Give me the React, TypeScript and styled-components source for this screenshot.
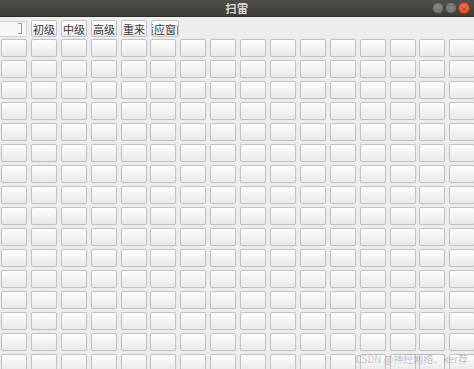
import styled, { createGlobalStyle } from "styled-components";

const GlobalStyle = createGlobalStyle`
  html, body {
    margin: 0;
    padding: 0;
    overflow: hidden;
    background: #ededed;
  }
`;

const Window = styled.div`
  width: 474px;
  height: 369px;
  display: flex;
  flex-direction: column;
  background: #ededed;
  font-family: "Noto Sans CJK SC", "Noto Sans", sans-serif;
  overflow: hidden;
  position: relative;
`;

const TitleBar = styled.div`
  height: 16px;
  flex-shrink: 0;
  display: flex;
  align-items: center;
  justify-content: center;
  position: relative;
  background: linear-gradient(#504f4a, #3c3b37);
  border-bottom: 1px solid #2e2d2a;
`;

const Title = styled.span`
  color: #dfdbd2;
  font-size: 11px;
  font-weight: 700;
  letter-spacing: 0.5px;
`;

const Controls = styled.div`
  position: absolute;
  right: 4px;
  top: 2px;
  display: flex;
  gap: 0;
`;

const Dot = styled.div<{ $close?: boolean }>`
  width: 10px;
  height: 10px;
  margin-left: 1px;
  border-radius: 50%;
  background: ${(p) =>
    p.$close
      ? "radial-gradient(circle at 50% 40%, #f3744a, #df4b1b)"
      : "radial-gradient(circle at 50% 40%, #8c8b86, #6b6a66)"};
  border: 1px solid ${(p) => (p.$close ? "#b23c14" : "#4a4945")};
  display: flex;
  align-items: center;
  justify-content: center;
  font-size: 6px;
  color: ${(p) => (p.$close ? "#5a1a05" : "#3c3b37")};
`;

const Toolbar = styled.div`
  height: 21px;
  flex-shrink: 0;
  display: flex;
  align-items: center;
  gap: 4px;
  padding: 1px 0 0 0;
`;

const CountBox = styled.div`
  width: 27px;
  height: 16px;
  box-sizing: border-box;
  background: #f6f6f6;
  border: 1px solid #d4d4d4;
  border-left: none;
  border-radius: 0 2px 2px 0;
  display: flex;
  align-items: center;
  justify-content: flex-end;
  padding-right: 4px;
`;

const Caret = styled.span`
  width: 3px;
  height: 9px;
  border: 1px solid #9a9a9a;
  border-left: none;
`;

const ToolButton = styled.div<{ $wide?: boolean }>`
  width: ${(p) => (p.$wide ? 28 : 26)}px;
  height: 17px;
  box-sizing: border-box;
  border: 1px solid #c4c4c4;
  border-radius: 2px;
  background: linear-gradient(#fbfbfb, #eaeaea);
  display: flex;
  align-items: center;
  justify-content: center;
  overflow: hidden;
  white-space: nowrap;
  font-size: 11px;
  color: #3a3a3a;
`;

const Board = styled.div`
  display: grid;
  grid-template-columns: repeat(16, 26px);
  grid-auto-rows: 18px;
  column-gap: 3.9px;
  row-gap: 3px;
  padding: 0 0 0 1px;
`;

const Cell = styled.div`
  box-sizing: border-box;
  border: 1px solid #c2c2c2;
  border-radius: 2px;
  background: linear-gradient(#fdfdfd, #e9e9e9);
  box-shadow: 0 0 1px rgba(0, 0, 0, 0.12);
`;

const Watermark = styled.div`
  position: absolute;
  right: 6px;
  bottom: 3px;
  font-size: 10px;
  color: rgba(150, 150, 150, 0.55);
  white-space: nowrap;
`;

const levels = ["初级", "中级", "高级", "重来"];

export default function App() {
  const cells = Array.from({ length: 16 * 16 });
  return (
    <>
      <GlobalStyle />
      <Window>
        <TitleBar>
          <Title>扫雷</Title>
          <Controls>
            <Dot>–</Dot>
            <Dot>▢</Dot>
            <Dot $close>×</Dot>
          </Controls>
        </TitleBar>
        <Toolbar>
          <CountBox>
            <Caret />
          </CountBox>
          {levels.map((l) => (
            <ToolButton key={l}>{l}</ToolButton>
          ))}
          <ToolButton $wide>适应窗口</ToolButton>
        </Toolbar>
        <Board>
          {cells.map((_, i) => (
            <Cell key={i} />
          ))}
        </Board>
        <Watermark>CSDN @神经网络、ker荐</Watermark>
      </Window>
    </>
  );
}
